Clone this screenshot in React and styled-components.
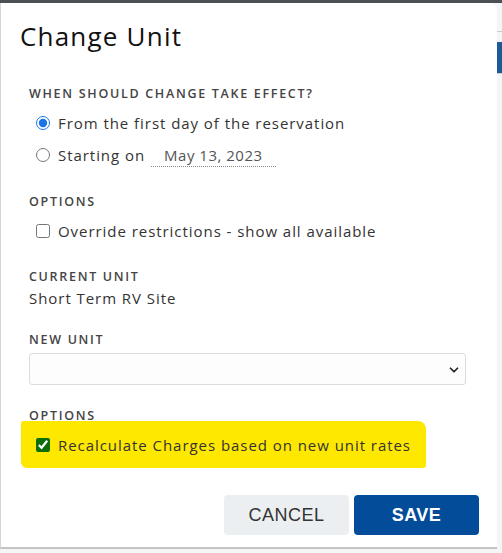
import React from 'react';
import styled, { createGlobalStyle } from 'styled-components';
import { ChevronDown } from 'lucide-react';

const GlobalStyle = createGlobalStyle`
  html, body {
    margin: 0;
    padding: 0;
    background: #fff;
  }
  body {
    font-family: "Open Sans", "Liberation Sans", sans-serif;
  }
`;

const Page = styled.div`
  width: 502px;
  height: 553px;
  display: grid;
  grid-template-columns: 497px 5px;
  background: #f4f5f6;
  border-top: 3px solid #4b5057;
  box-sizing: border-box;
  overflow: hidden;
`;

const Behind = styled.div`
  display: flex;
  flex-direction: column;
  padding-top: 28px;
`;

const BehindLine = styled.div`
  height: 1px;
  background: #c9cbce;
`;

const BehindBar = styled.div`
  height: 31px;
  margin-top: 10px;
  background: #1d5a96;
`;

const Modal = styled.div`
  background: #fff;
  border-left: 1px solid #d4d4d4;
  border-bottom: 2px solid #c4c4c4;
  border-top-right-radius: 7px;
  padding: 16px 0 0 28px;
  height: 546px;
  box-sizing: border-box;
  color: #222;
`;

const Title = styled.h1`
  margin: 0 0 0 -9px;
  font-weight: 400;
  font-size: 26px;
  line-height: 34px;
  color: #111;
  letter-spacing: 1.2px;
`;

const Section = styled.div`
  margin-top: ${props => props.gap || 0}px;
`;

const Label = styled.div`
  font-size: 12.5px;
  font-weight: 600;
  letter-spacing: 1.7px;
  color: #444;
  text-transform: uppercase;
  line-height: 14px;
  margin-bottom: ${props => props.below ?? 8}px;
`;

const OptionRow = styled.label`
  display: flex;
  align-items: center;
  gap: 8px;
  height: 32px;
  padding-left: 7px;
  font-size: 15px;
  color: #333;
  letter-spacing: 0.95px;
`;

const Radio = styled.input.attrs({ type: 'radio' })`
  width: 14px;
  height: 14px;
  margin: 0;
  accent-color: #1a73e8;
`;

const Check = styled.input.attrs({ type: 'checkbox' })`
  width: 14px;
  height: 14px;
  margin: 0;
  accent-color: #0b6e0b;
`;

const DateField = styled.span`
  margin-left: -2px;
  padding: 0 13px;
  color: #555;
  letter-spacing: 0.5px;
  border-bottom: 1px dotted #888;
  line-height: 22px;
`;

const Value = styled.div`
  font-size: 15px;
  color: #333;
  letter-spacing: 0.95px;
`;

const SelectWrap = styled.div`
  position: relative;
  width: 437px;
`;

const Select = styled.select`
  appearance: none;
  display: block;
  width: 100%;
  height: 32px;
  border: 1px solid #dcdcdc;
  border-radius: 3px;
  background: #fdfdfd;
  font-family: inherit;
  font-size: 15px;
`;

const Chevron = styled(ChevronDown)`
  position: absolute;
  right: 5px;
  top: 10px;
  pointer-events: none;
  color: #222;
`;

const Highlight = styled(OptionRow)`
  margin-left: -8px;
  width: 405px;
  height: 47px;
  padding-left: 15px;
  box-sizing: border-box;
  background: #ffe800;
  border-radius: 2px 8px 3px 6px;
  color: #333;
`;

const Footer = styled.div`
  display: flex;
  justify-content: flex-end;
  gap: 5px;
  margin-top: 27px;
  padding-right: 18px;
`;

const Button = styled.button`
  width: 125px;
  height: 40px;
  border: none;
  border-radius: 4px;
  font-family: "Liberation Sans", Arial, sans-serif;
  font-size: 18px;
  letter-spacing: 0.5px;
  background: ${props => (props.primary ? '#024c9a' : '#eceff1')};
  color: ${props => (props.primary ? '#fff' : '#333')};
  font-weight: ${props => (props.primary ? 700 : 400)};
`;

export default function App() {
  return (
    <>
      <GlobalStyle />
      <Page>
        <Modal>
          <Title>Change Unit</Title>
          <Section gap={34}>
            <Label below={6}>When should change take effect?</Label>
            <OptionRow>
              <Radio name="when" defaultChecked />
              From the first day of the reservation
            </OptionRow>
            <OptionRow>
              <Radio name="when" />
              Starting on
              <DateField>May 13, 2023</DateField>
            </OptionRow>
          </Section>
          <Section gap={24}>
            <Label below={6}>Options</Label>
            <OptionRow>
              <Check />
              Override restrictions - show all available
            </OptionRow>
          </Section>
          <Section gap={23}>
            <Label below={4}>Current Unit</Label>
            <Value>Short Term RV Site</Value>
          </Section>
          <Section gap={25}>
            <Label below={6}>New Unit</Label>
            <SelectWrap>
              <Select defaultValue="">
                <option value=""></option>
              </Select>
              <Chevron size={14} strokeWidth={3} />
            </SelectWrap>
          </Section>
          <Section gap={24}>
            <Label below={-2}>Options</Label>
            <Highlight>
              <Check defaultChecked />
              Recalculate Charges based on new unit rates
            </Highlight>
          </Section>
          <Footer>
            <Button>CANCEL</Button>
            <Button primary>SAVE</Button>
          </Footer>
        </Modal>
        <Behind>
          <BehindLine />
          <BehindBar />
          <BehindLine />
        </Behind>
      </Page>
    </>
  );
}
